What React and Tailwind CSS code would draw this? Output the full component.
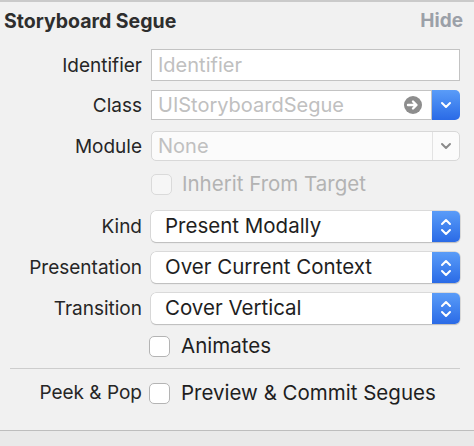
import React from "react";

const font = { fontFamily: "Inter, 'Helvetica Neue', Arial, sans-serif" };

const Label = ({ children, dim }) => (
  <div
    className={`text-right text-[19px] leading-none pr-[9px] ${
      dim ? "text-[#b0b0b0]" : "text-[#262626]"
    }`}
  >
    {children}
  </div>
);

const UpDown = () => (
  <svg width="14" height="22" viewBox="0 0 14 22" fill="none">
    <path d="M3 8 L7 4 L11 8" stroke="white" strokeWidth="2" strokeLinecap="round" strokeLinejoin="round" />
    <path d="M3 14 L7 18 L11 14" stroke="white" strokeWidth="2" strokeLinecap="round" strokeLinejoin="round" />
  </svg>
);

const Chevron = ({ color }) => (
  <svg width="14" height="10" viewBox="0 0 14 10" fill="none">
    <path d="M3 3 L7 7 L11 3" stroke={color} strokeWidth="2" strokeLinecap="round" strokeLinejoin="round" />
  </svg>
);

const Popup = ({ value }) => (
  <div className="flex h-[31px] rounded-[5px] bg-white shadow-[0_0_0_0.5px_#c4c4c4,0_1px_1px_#b8b8b8] overflow-hidden">
    <div className="flex-1 flex items-center pl-[14px] text-[20.5px] text-[#1e1e1e]">{value}</div>
    <div className="w-[28px] flex items-center justify-center bg-gradient-to-b from-[#5a9cf8] to-[#2a6ae6]">
      <UpDown />
    </div>
  </div>
);

const Checkbox = ({ dim }) => (
  <div
    className={`w-[21px] h-[21px] rounded-[5px] border ${
      dim ? "border-[#dadada] bg-[#f6f6f6]" : "border-[#b4b4b4] bg-white"
    }`}
  />
);

const Row = ({ label, dim, className = "", children }) => (
  <div className={`grid grid-cols-[151px_1fr] items-center ${className}`}>
    <Label dim={dim}>{label}</Label>
    <div>{children}</div>
  </div>
);

export default function App() {
  return (
    <div style={font} className="w-[474px] h-[446px] bg-[#e9e9e9] overflow-hidden">
      <div className="bg-[#f1f1f1] border-t-2 border-[#cacaca] border-b border-b-[#bdbdbd] h-[431px] pr-[14px]">
        <div className="flex items-center justify-between h-[39px] pl-[4px]">
          <span className="text-[19.5px] font-bold text-[#2e2e2e]">Storyboard Segue</span>
          <span className="text-[19px] font-bold text-[#9ba0a8] -mr-[3px]">Hide</span>
        </div>

        <Row label="Identifier" className="mt-[8px]">
          <div className="h-[32px] bg-white border border-[#c3c3c3] flex items-center pl-[6px] text-[20px] text-[#c0c0c0]">
            Identifier
          </div>
        </Row>

        <Row label="Class" className="mt-[9px]">
          <div className="flex h-[30px]">
            <div className="flex-1 bg-white border border-[#c3c3c3] flex items-center pl-[6px] pr-[9px] text-[20px] text-[#c0c0c0]">
              <span className="flex-1">UIStoryboardSegue</span>
              <svg width="18" height="18" viewBox="0 0 18 18">
                <circle cx="9" cy="9" r="9" fill="#8d8d8d" />
                <path d="M4 9 H12 M9 5.5 L12.5 9 L9 12.5" stroke="white" strokeWidth="2.4" fill="none" strokeLinecap="round" strokeLinejoin="round" />
              </svg>
            </div>
            <div className="w-[28px] rounded-r-[5px] flex items-center justify-center bg-gradient-to-b from-[#5a9cf8] to-[#2a6ae6]">
              <Chevron color="white" />
            </div>
          </div>
        </Row>

        <Row label="Module" className="mt-[11px]">
          <div className="flex h-[30px] rounded-[5px] border border-[#d8d8d8] bg-[#fbfbfb] overflow-hidden">
            <div className="flex-1 flex items-center pl-[6px] text-[20px] text-[#c0c0c0]">None</div>
            <div className="w-[27px] border-l border-[#e3e3e3] flex items-center justify-center">
              <Chevron color="#8a8a8a" />
            </div>
          </div>
        </Row>

        <Row label="" className="mt-[12px]">
          <div className="flex items-center gap-[10px] h-[23px]">
            <Checkbox dim />
            <span className="text-[20.5px] text-[#b3b3b3]">Inherit From Target</span>
          </div>
        </Row>

        <Row label="Kind" className="mt-[15px]">
          <Popup value="Present Modally" />
        </Row>
        <Row label="Presentation" className="mt-[10px]">
          <Popup value="Over Current Context" />
        </Row>
        <Row label="Transition" className="mt-[10px]">
          <Popup value="Cover Vertical" />
        </Row>

        <div className="grid grid-cols-[149px_1fr] items-center mt-[11px]">
          <div />
          <div className="flex items-center gap-[11px] h-[22px]">
            <Checkbox />
            <span className="text-[20.5px] text-[#1e1e1e]">Animates</span>
          </div>
        </div>

        <div className="ml-[10px] mt-[11px] border-t border-[#cdcdcd]" />

        <div className="grid grid-cols-[149px_1fr] items-center mt-[10px]">
          <div className="text-right text-[19px] text-[#262626] pr-[7px]">Peek &amp; Pop</div>
          <div className="flex items-center gap-[11px] h-[22px]">
            <Checkbox />
            <span className="text-[20.5px] text-[#1e1e1e]">Preview &amp; Commit Segues</span>
          </div>
        </div>
      </div>
    </div>
  );
}
